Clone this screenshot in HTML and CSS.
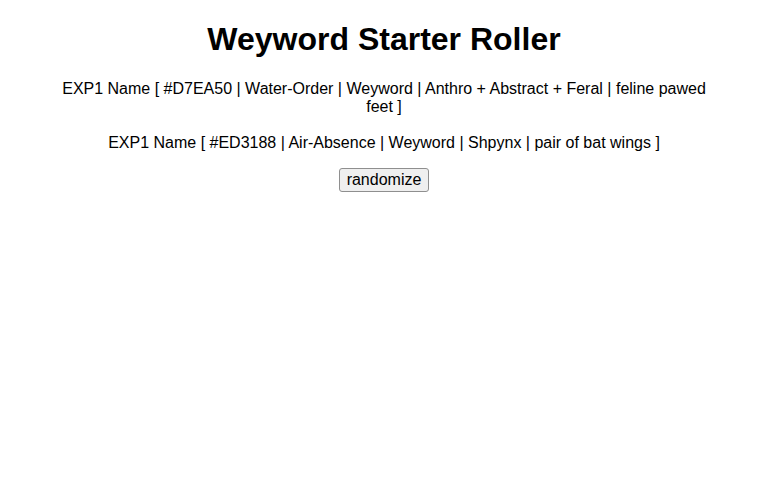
FILE: index.html
```html
<!DOCTYPE html>
<html>
<head>
<meta charset="utf-8">
<title>Weyword Starter Roller</title>
<link rel="stylesheet" href="styles.css">
</head>
<body>
<main class="roller">
  <h1 class="title">Weyword Starter Roller</h1>
  <p class="result">EXP1 Name [ #D7EA50 | Water-Order | Weyword | Anthro + Abstract + Feral | feline pawed feet ]</p>
  <p class="result">EXP1 Name [ #ED3188 | Air-Absence | Weyword | Shpynx | pair of bat wings ]</p>
  <button class="roll-btn" type="button">randomize</button>
</main>
</body>
</html>
```
FILE: styles.css
```css
body {
  margin: 8px;
  background: #fff;
  color: #000;
  font-family: "Liberation Sans", Arial, sans-serif;
}

.roller {
  max-width: 670px;
  margin: 0 auto;
  display: flex;
  flex-direction: column;
  align-items: center;
  text-align: center;
}

.title {
  font-size: 32px;
  font-weight: bold;
  margin: 13px 0 22px;
  line-height: 37px;
}

.result {
  font-size: 16px;
  line-height: 18px;
  margin: 0 0 18px;
}

.roll-btn {
  font-family: "Liberation Sans", Arial, sans-serif;
  font-size: 16px;
  line-height: 18px;
  padding: 2px 7px;
  margin-top: -2px;
  background: #efefef;
  border: 1px solid #8f8f8f;
  border-radius: 3px;
  color: #000;
}
```
